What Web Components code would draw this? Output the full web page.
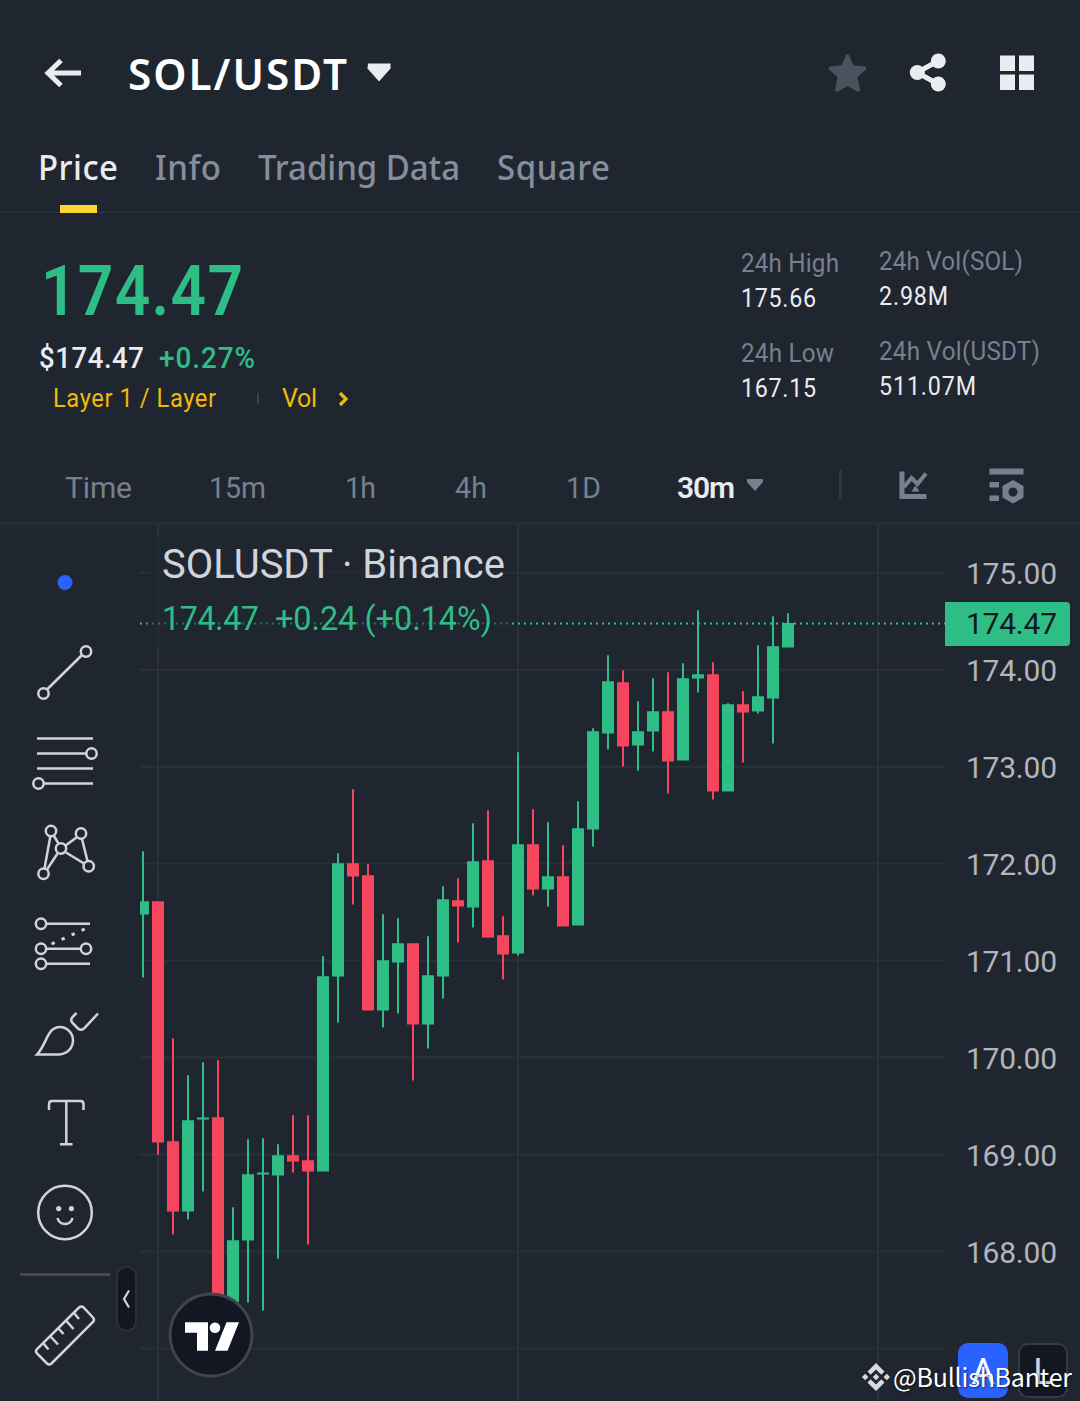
<!DOCTYPE html>
<html lang="en">
<head>
<meta charset="utf-8">
<title>SOL/USDT</title>
<style>
    html, body { margin: 0; background: #202630; }
    body { width: 1080px; height: 1401px; overflow: hidden; font-family: Roboto, "Liberation Sans", sans-serif; }
</style>
</head>
<body>
<trade-page></trade-page>
<script>
// Single line of text that is spaced (or condensed) to a fixed width
class FitText extends HTMLElement {
    constructor() {
        super();
        this.attachShadow({ mode: 'open' });
    }

    connectedCallback() {
        const w = Number(this.getAttribute('w'));
        const text = this.getAttribute('text');
        this.shadowRoot.innerHTML = `
            <style>
                :host { display: flex; flex: none; width: ${w}px; line-height: 1; }
                span { flex: none; white-space: pre; transform-origin: 0 50%; }
            </style>
            <span>${text}</span>
        `;
        const span = this.shadowRoot.querySelector('span');
        const condense = Number(this.getAttribute('condense') || 1);
        const natural = span.getBoundingClientRect().width * condense;
        const spacing = (w - natural) / (text.length - 1) / condense;
        span.style.letterSpacing = `${spacing}px`;
        if (condense !== 1) span.style.transform = `scaleX(${condense})`;
    }
}
customElements.define('fit-text', FitText);

class PageHeader extends HTMLElement {
    constructor() {
        super();
        this.attachShadow({ mode: 'open' }).innerHTML = `
            <style>
                :host { display: flex; align-items: center; height: 146px; color: #fff; }
                svg { flex: none; display: block; }
                .back { margin-left: 44px; }
                .title { margin-left: 46px; font: 600 44px "Noto Sans", sans-serif; margin-top: -1px; }
                .caret { margin-left: 20px; }
                .star { margin-left: auto; }
                .share { margin-left: 43px; }
                .grid { margin: 0 46px 0 53px; }
            </style>
            <svg class="back" width="38" height="30" viewBox="44 58 38 30" fill="none" stroke="#eaecef" stroke-width="5">
                <path d="M61 60.500L48 73l13 12.500M48 73h33"/>
            </svg>
            <fit-text class="title" w="219" condense="0.96" text="SOL/USDT"></fit-text>
            <svg class="caret" width="24" height="20" viewBox="367 63 24 20" fill="#eaecef">
                <path d="M368 63.500h22.500v5L379 81.500l-11.500-13z"/>
            </svg>
            <svg class="star" width="38" height="40" viewBox="828 53 38 40" fill="#4b515d">
                <path d="M846 55.200q1.500-2.400 3 0l4.500 10.100 11.300 1.200q2.600.8 1 3l-8.300 7.700 2.500 12.300q-.2 3-3 2l-9.500-5.500-9.500 5.500q-2.800 1-3-2l2.500-12.300-8.300-7.700q-1.600-2.200 1-3l11.300-1.200z"/>
            </svg>
            <svg class="share" width="38" height="40" viewBox="909 53 38 40" fill="#eaecef">
                <path d="M938 61l-21 11.500L938 84" fill="none" stroke="#eaecef" stroke-width="5"/>
                <circle cx="938.300" cy="61" r="7.500"/><circle cx="917.300" cy="72.500" r="7.500"/><circle cx="938.300" cy="84" r="7.500"/>
            </svg>
            <svg class="grid" width="34" height="36" viewBox="1000 55 34 36" fill="#eaecef">
                <path d="M1000 55.500h15v15.500h-15zM1019 55.500h15v15.500h-15zM1000 74.500h15v15.500h-15zM1019 74.500h15v15.500h-15z"/>
            </svg>
        `;
    }
}
customElements.define('page-header', PageHeader);

class PageTabs extends HTMLElement {
    constructor() {
        super();
        this.attachShadow({ mode: 'open' }).innerHTML = `
            <style>
                :host {
                    display: flex; gap: 37px; box-sizing: border-box; height: 67px; padding-left: 38px;
                    box-shadow: inset 0 -1.500px #2b313b; color: #848e9c;
                    font: 500 34px "Noto Sans", sans-serif;
                }
                .tab { display: flex; flex-direction: column; justify-content: space-between; align-items: center; padding-top: 4px; }
                .active { color: #eaecef; }
                .bar { width: 37px; height: 8px; background: #fcd535; }
            </style>
            <div class="tab active"><fit-text w="80" condense="0.97" text="Price"></fit-text><div class="bar"></div></div>
            <div class="tab"><fit-text w="66" condense="0.97" text="Info"></fit-text></div>
            <div class="tab"><fit-text w="202" condense="0.97" text="Trading Data"></fit-text></div>
            <div class="tab"><fit-text w="113" condense="0.97" text="Square"></fit-text></div>
        `;
    }
}
customElements.define('page-tabs', PageTabs);

class StatItem extends HTMLElement {
    constructor() {
        super();
        this.attachShadow({ mode: 'open' });
    }

    connectedCallback() {
        const [lw, vw] = this.getAttribute('widths').split(' ');
        this.shadowRoot.innerHTML = `
            <style>
                :host { display: block; height: 90px; font-size: 25px; }
                .label { color: #76808f; }
                .value { color: #eaecef; margin-top: 10px; }
            </style>
            <fit-text class="label" w="${lw}" condense="0.97" text="${this.getAttribute('label')}"></fit-text>
            <fit-text class="value" w="${vw}" condense="0.93" text="${this.getAttribute('value')}"></fit-text>
        `;
    }
}
customElements.define('stat-item', StatItem);

class PriceSummary extends HTMLElement {
    constructor() {
        super();
        this.attachShadow({ mode: 'open' }).innerHTML = `
            <style>
                :host { display: flex; height: 237px; color: #eaecef; }
                .left { flex: none; width: 740px; box-sizing: border-box; padding: 43px 0 0 39px; }
                .big { font-size: 70px; font-weight: 600; color: #2ebd85; margin-left: 2px; }
                .row { display: flex; font-size: 29px; font-weight: 500; margin-top: 18px; gap: 15px; }
                .up { color: #2ebd85; }
                .tags { display: flex; align-items: center; margin: 13px 0 0 14px; font-size: 25px; color: #f0b90b; }
                .sep { width: 2px; height: 11px; background: #3a404b; margin: 0 23px 0 41px; }
                svg { margin-left: 21px; }
                .col { width: 93px; padding-top: 38px; margin-left: 1px; }
                .col2 { padding-top: 36px; margin-left: 45px; }
            </style>
            <div class="left">
                <fit-text class="big" w="202" condense="0.89" text="174.47"></fit-text>
                <div class="row">
                    <fit-text w="105" condense="0.95" text="$174.47"></fit-text>
                    <fit-text class="up" w="96" condense="0.96" text="+0.27%"></fit-text>
                </div>
                <div class="tags">
                    <fit-text w="163" condense="0.95" text="Layer 1 / Layer"></fit-text>
                    <div class="sep"></div>
                    <fit-text w="35" text="Vol"></fit-text>
                    <svg width="12" height="16" fill="none" stroke="#f0b90b" stroke-width="3.200"><path d="M2 2l6 6-6 6"/></svg>
                </div>
            </div>
            <div class="col">
                <stat-item label="24h High" value="175.66" widths="98 75"></stat-item>
                <stat-item label="24h Low" value="167.15" widths="93 75"></stat-item>
            </div>
            <div class="col2">
                <stat-item label="24h Vol(SOL)" value="2.98M" widths="144 69"></stat-item>
                <stat-item label="24h Vol(USDT)" value="511.07M" widths="161 97"></stat-item>
            </div>
        `;
    }
}
customElements.define('price-summary', PriceSummary);

class IntervalBar extends HTMLElement {
    constructor() {
        super();
        this.attachShadow({ mode: 'open' }).innerHTML = `
            <style>
                :host {
                    display: flex; align-items: center; box-sizing: border-box; height: 75px; padding-left: 65px;
                    border-bottom: 3px solid #272d37; color: #76808f; font-size: 30px;
                }
                fit-text { margin-top: 3px; }
                .active { color: #eaecef; font-weight: 600; }
                .sep { width: 3px; height: 30px; background: #303640; margin: -2px 57px 0 76px; }
                svg { flex: none; }
            </style>
            <fit-text w="67" text="Time"></fit-text>
            <fit-text style="margin-left: 77px" w="57" condense="0.95" text="15m"></fit-text>
            <fit-text style="margin-left: 79px" w="31" condense="0.95" text="1h"></fit-text>
            <fit-text style="margin-left: 79px" w="32" condense="0.95" text="4h"></fit-text>
            <fit-text style="margin-left: 79px" w="35" condense="0.95" text="1D"></fit-text>
            <fit-text class="active" style="margin-left: 76px" w="58" text="30m"></fit-text>
            <svg style="margin: -2px 0 0 12px" width="16" height="12" fill="#76808f"><path d="M0 0h16v3L8 12 0 3z"/></svg>
            <div class="sep"></div>
            <svg style="margin-top: -2px" width="29" height="30" viewBox="899 470 29 30" fill="none" stroke="#76808f">
                <path d="M902 471.500V496.500H926.500" stroke-width="5"/>
                <path d="M904 487l7.500-9 6 6L926 473.500" stroke-width="4"/>
                <path d="M911.500 491.500l4-6 4 6z" fill="#76808f" stroke="none"/>
            </svg>
            <svg style="margin: -1px 0 0 61px" width="36" height="37" viewBox="989 467 36 37" fill="#76808f">
                <path d="M989.500 468.500h34v6h-34zM989.500 482h9.500v5.500h-9.500zM989.500 495.500h9.500v5.500h-9.500z"/>
                <path fill-rule="evenodd" d="M1013 480l10.500 6v11.500l-10.500 6-10.500-6V486zM1013 487.500a4.500 4.500 0 1 0 .01 0z"/>
            </svg>
        `;
    }
}
customElements.define('interval-bar', IntervalBar);

// Drawing tools: each icon is centred on (65, 0)
const TOOLS = [
    '<circle cx="65" cy=".500" r="7.500" fill="#2962ff" stroke="none"/>',
    '<path d="M47 17.500L82-17"/><circle cx="43.500" cy="21.500" r="5.200"/><circle cx="86" cy="-20.500" r="5.200"/>',
    '<path d="M37-23.500h56M37-8.500h49M37 6.500h56M44 21.500h49"/><circle cx="91.500" cy="-8.500" r="5.200"/><circle cx="38.500" cy="21.500" r="5.200"/>',
    '<path d="M50.300-15.500L44.500 16.500M54-16l4.500 7.500M65.500-6.500l11-8M57.500 1.500L47 17.500M66 .5l18 11M82-13l5.500 22"/><circle cx="51" cy="-21" r="5.200"/><circle cx="81" cy="-18.500" r="5.200"/><circle cx="61" cy="-3.500" r="5.200"/><circle cx="43.500" cy="21.800" r="5.200"/><circle cx="88.700" cy="14.300" r="5.200"/>',
    '<path d="M47-18.300h43M47 6.700h34M47 21.700h43"/><path d="M51.500 2L87-14" stroke-width="3" stroke-dasharray="3.500 7.500"/><circle cx="41" cy="-18.300" r="5.200"/><circle cx="41" cy="6.700" r="5.200"/><circle cx="86" cy="6.700" r="5.200"/><circle cx="41" cy="21.700" r="5.200"/>',
    '<path d="M37 22.500C47 12 47-5 60-5 67-5 73 1 73 8.500 73 16 67 22 59 22.500z"/><path d="M76.500-19l-4 4q-2.500 3 0 6l5.500 5.500q3 2.500 6 0l14-15"/>',
    '<path d="M49-12v-6q0-3 3-3h28.500q3 0 3 3v6M66.300-21v43M60 22.300h12.500"/>',
    '<circle cx="65" cy=".500" r="26.800"/><circle cx="58.700" cy="-3.400" r="2.600" fill="#d1d4dc" stroke="none"/><circle cx="71.400" cy="-3.400" r="2.600" fill="#d1d4dc" stroke="none"/><path d="M57.500 6c2 8 13 8 15 0"/>'
];

class ToolRail extends HTMLElement {
    constructor() {
        super();
        this.attachShadow({ mode: 'open' }).innerHTML = `
            <style>
                :host { display: block; position: relative; box-sizing: border-box; width: 140px; height: 876px; padding-top: 12px; overflow: hidden; }
                svg { display: block; }
                .sep { width: 90px; height: 3px; background: #434851; margin: 16px 0 14px 20px; }
                .handle { position: absolute; left: 116px; top: 741px; }
            </style>
            ${TOOLS.map(t => `<svg width="130" height="90" viewBox="0 -45 130 90" fill="none" stroke="#d1d4dc" stroke-width="2.500">${t}</svg>`).join('')}
            <div class="sep"></div>
            <svg width="130" height="90" viewBox="0 1290 130 90" fill="none" stroke="#d1d4dc" stroke-width="2.500">
                <path d="M79 1307.500q2.300-2 4.500 0l9.500 10q2 2.200 0 4.500l-41.500 41.500q-2.200 2-4.500 0l-10-10q-2-2.200 0-4.500z"/>
                <path d="M43.500 1343.500l5 6M50.500 1336.500l7.500 8M58.500 1328.500l5 5.500M66 1320.500l7.500 8.500M74 1313l5 6"/>
            </svg>
            <svg width="130" height="30" viewBox="0 1380 130 30" fill="none" stroke="#d1d4dc" stroke-width="2.500"><path d="M52 1406q9.500-7 19 0"/></svg>
            <svg class="handle" width="21" height="66" viewBox="0 0 21 66" fill="none">
                <rect x="1" y="1" width="19" height="63.500" rx="9" fill="#131722" stroke="#2b303b" stroke-width="2"/>
                <path d="M13 24.500L8 33l5 8.500" stroke="#d1d4dc" stroke-width="2.200"/>
            </svg>
        `;
    }
}
customElements.define('tool-rail', ToolRail);

// direction, high, body top, body bottom, low (vertical chart units)
const CANDLES = [
    ['u', 851.3, 901.3, 914.6, 977.6], ['d', 901.3, 901.3, 1142.5, 1154.5], ['d', 1038.3, 1141.3, 1211.6, 1234.6],
    ['u', 1075.3, 1120.3, 1211.6, 1219.6], ['u', 1062.3, 1117.5, 1119.6, 1191.6], ['d', 1060.3, 1117.3, 1300, 1300],
    ['u', 1207.3, 1240.3, 1302, 1302], ['u', 1139.3, 1174.3, 1240.6, 1302.6], ['u', 1138.3, 1172.5, 1174.5, 1310.6],
    ['u', 1144.3, 1155.3, 1175.6, 1258.6], ['d', 1115.3, 1155.3, 1161.6, 1172.6], ['d', 1115.3, 1160.3, 1171.6, 1244.6],
    ['u', 956.3, 976.3, 1171.6, 1171.6], ['u', 853.3, 863.3, 976.6, 1022.6], ['d', 789.3, 863.3, 876.6, 904.6],
    ['d', 864.3, 875.3, 1010.6, 1010.6], ['u', 914.3, 960.3, 1010.6, 1027.6], ['u', 918.3, 943.3, 962.6, 1013.6],
    ['d', 943.3, 943.3, 1024.6, 1080.6], ['u', 936.3, 975.3, 1024.6, 1048.6], ['u', 886.3, 899.3, 976.6, 998.6],
    ['d', 878.3, 900.3, 906.6, 942.6], ['u', 823.3, 861.3, 907.6, 927.6], ['d', 810.3, 860.3, 937.6, 937.6],
    ['d', 916.3, 935.3, 954.6, 979.6], ['u', 752.3, 844.3, 953.6, 955.6], ['d', 809.3, 844.3, 889.6, 895.6],
    ['u', 822.3, 876.3, 889.6, 906.6], ['d', 845.3, 876.3, 926.6, 926.6], ['u', 801.3, 828.3, 925.6, 925.6],
    ['u', 728.3, 731.3, 829.6, 846.6], ['u', 655.3, 681.3, 733.6, 749.6], ['d', 670.3, 682.3, 746.6, 766.6],
    ['u', 701.3, 731.3, 745.6, 770.6], ['u', 678.3, 711.3, 731.6, 751.6], ['d', 672.3, 711.3, 761.6, 793.6],
    ['u', 663.3, 678.3, 760.6, 760.6], ['u', 610.3, 674.3, 678.6, 692.6], ['d', 662.3, 674.3, 791.6, 799.6],
    ['u', 703.3, 704.3, 791.6, 791.6], ['d', 691.3, 704.3, 712.6, 762.6], ['u', 645.3, 696.3, 711.6, 713.6],
    ['u', 616.3, 646.3, 698.6, 743.6], ['u', 613.3, 623, 647.6, 647.6]
];

class CandleChart extends HTMLElement {
    constructor() {
        super();
        this.attachShadow({ mode: 'open' });
    }

    connectedCallback() {
        const rows = Array.from({ length: 9 }, (_, i) => 572.7 + i * 96.97);
        const cols = [158, 518, 878];
        const candles = CANDLES.map(([dir, high, top, bottom, low], i) => {
            const x = 143 + i * 15;
            return `<path class="${dir}" d="M${x - 1} ${high}h2V${low}h-2zM${x - 6} ${top}h12V${bottom}h-12z"/>`;
        }).join('');

        this.shadowRoot.innerHTML = `
            <style>
                :host { display: block; position: relative; width: 805px; height: 876px; }
                svg { display: block; }
                .u { fill: #2ebd85; }
                .d { fill: #f6465d; }
                .grid { stroke: #2b313a; stroke-width: 2; }
                .legend {
                    position: absolute; left: 7px; top: 11px; width: 362px; height: 112px; box-sizing: border-box;
                    padding: 9px 0 0 15px; background: rgba(32, 38, 48, .5); color: #d1d4dc;
                }
                .name { font-size: 40px; }
                .quote { display: flex; gap: 16px; margin-top: 16px; font-size: 34px; color: #2ebd85; }
                .logo { position: absolute; left: 28px; top: 767px; }
            </style>
            <svg width="805" height="876" viewBox="140 525 805 876">
                <g class="grid">
                    ${rows.map(y => `<path d="M140 ${y}H945"/>`).join('')}
                    ${cols.map(x => `<path d="M${x} 525V1401"/>`).join('')}
                </g>
                ${candles}
                <path d="M140 623.500H945" stroke="#2ebd85" stroke-width="2" stroke-dasharray="2 4"/>
            </svg>
            <div class="legend">
                <fit-text class="name" w="343" text="SOLUSDT · Binance"></fit-text>
                <div class="quote">
                    <fit-text w="97" condense="0.95" text="174.47"></fit-text>
                    <fit-text w="217" condense="0.95" text="+0.24 (+0.14%)"></fit-text>
                </div>
            </div>
            <svg class="logo" width="86" height="86" viewBox="168 1292 86 86">
                <circle cx="211" cy="1335" r="41" fill="#131722" stroke="#40444f" stroke-width="3"/>
                <path d="M185 1322.300h23v28.400h-11v-18h-12zM226.500 1322.300h12.500l-11.500 28.400H215z" fill="#fff"/>
                <circle cx="215" cy="1327.700" r="5.300" fill="#fff"/>
            </svg>
        `;
    }
}
customElements.define('candle-chart', CandleChart);

class PriceAxis extends HTMLElement {
    constructor() {
        super();
        this.attachShadow({ mode: 'open' });
    }

    connectedCallback() {
        const prices = [175, 174, 173, 172, 171, 170, 169, 168];
        this.shadowRoot.innerHTML = `
            <style>
                :host { display: block; position: relative; width: 135px; height: 876px; font-size: 30px; color: #b2b5be; }
                .price { display: flex; align-items: center; height: 96.97px; padding-left: 21px; }
                .price fit-text { margin-top: 1px; }
                .tag {
                    position: absolute; left: 0; top: 76.5px; width: 125px; height: 44px; box-sizing: border-box;
                    display: flex; align-items: center; padding: 1px 0 0 21px;
                    background: #2ebd85; color: #131722; border-radius: 0 4px 4px 0;
                }
                .modes { display: flex; gap: 10px; margin: 42px 0 0 13px; }
                .mode {
                    box-sizing: border-box; width: 50px; height: 55px; border-radius: 10px; line-height: 54px;
                    text-align: center; font-size: 36px; color: #d1d4dc; background: #131722; border: 2px solid #363a45;
                }
                .on { background: #2962ff; border-color: #2962ff; color: #fff; }
            </style>
            ${prices.map(p => `<div class="price"><fit-text w="91" text="${p.toFixed(2)}"></fit-text></div>`).join('')}
            <div class="modes"><div class="mode on">A</div><div class="mode">L</div></div>
            <div class="tag"><fit-text w="91" text="174.47"></fit-text></div>
        `;
    }
}
customElements.define('price-axis', PriceAxis);

class AuthorMark extends HTMLElement {
    constructor() {
        super();
        this.attachShadow({ mode: 'open' }).innerHTML = `
            <style>
                :host { display: flex; align-items: center; gap: 3px; color: #fff; font: 400 25px "Noto Sans CJK SC", "Noto Sans", sans-serif; text-shadow: 1px 1px 2px rgba(0, 0, 0, .6); }
                fit-text { margin-top: -2px; }
            </style>
            <svg width="28" height="28" viewBox="-14 -14 28 28" fill="#d8dadf">
                <path d="M0-14l8.500 8.500-3.200 3.200L0-7.600l-5.300 5.300-3.200-3.200zM0 14l8.500-8.500-3.200-3.200L0 7.600l-5.300-5.300-3.200 3.200zM0-3.200L3.200 0 0 3.200-3.200 0zM-10.800-3.200L-7.600 0l-3.200 3.200L-14 0zM10.800-3.200L14 0l-3.200 3.200L7.600 0z"/>
            </svg>
            <fit-text w="179" text="@BullishBanter"></fit-text>
        `;
    }
}
customElements.define('author-mark', AuthorMark);

class TradePage extends HTMLElement {
    constructor() {
        super();
        this.attachShadow({ mode: 'open' }).innerHTML = `
            <style>
                :host { display: block; position: relative; width: 1080px; height: 1401px; overflow: hidden; background: #202630; }
                .chart { display: flex; }
                author-mark { position: absolute; left: 862px; top: 1363px; }
            </style>
            <page-header></page-header>
            <page-tabs></page-tabs>
            <price-summary></price-summary>
            <interval-bar></interval-bar>
            <div class="chart">
                <tool-rail></tool-rail>
                <candle-chart></candle-chart>
                <price-axis></price-axis>
            </div>
            <author-mark></author-mark>
        `;
    }
}
customElements.define('trade-page', TradePage);
</script>
</body>
</html>
